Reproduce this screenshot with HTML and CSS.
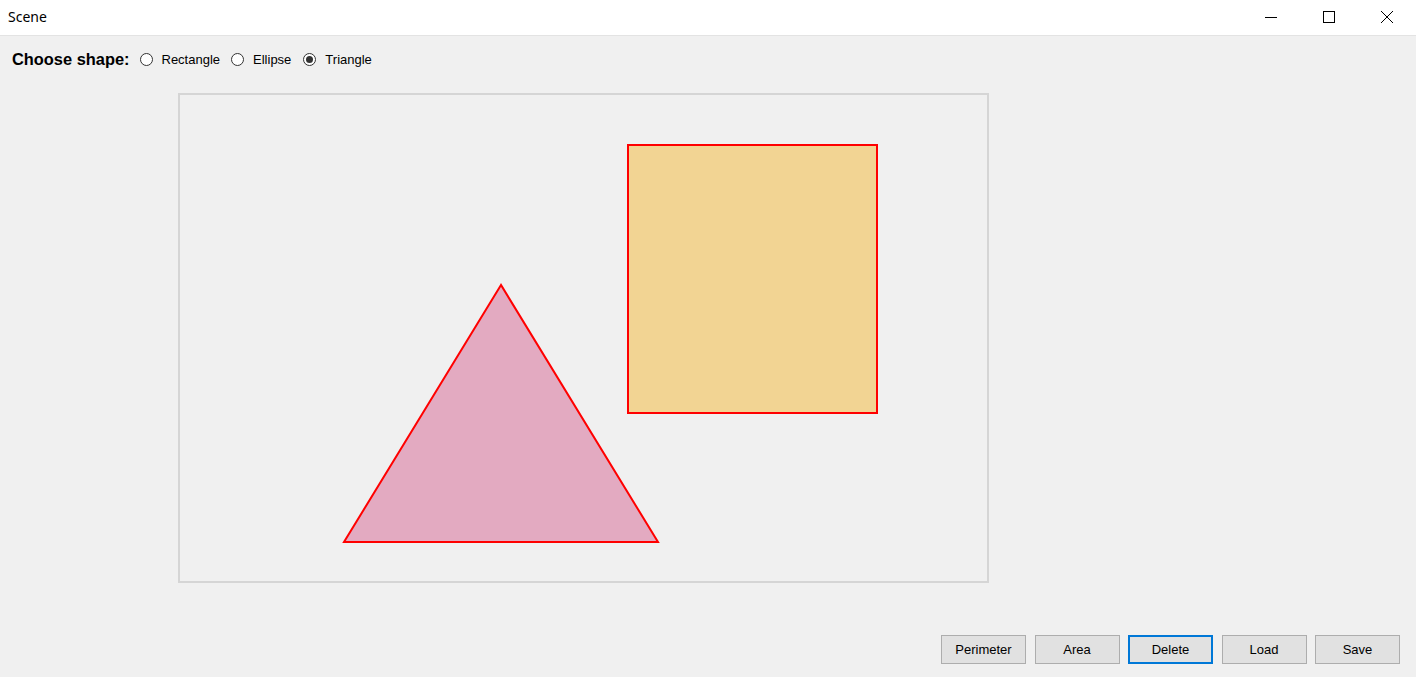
FILE: index.html
```html
<!DOCTYPE html>
<html>
<head>
<meta charset="utf-8">
<title>Scene</title>
<link rel="stylesheet" href="styles.css">
</head>
<body>
<div class="titlebar">
  <div class="title">Scene</div>
  <div class="controls">
    <div class="ctl"><svg width="14" height="14" viewBox="0 0 14 14"><line x1="1" y1="7.5" x2="13" y2="7.5" stroke="#000" stroke-width="1"/></svg></div>
    <div class="ctl"><svg width="14" height="14" viewBox="0 0 14 14"><rect x="1.5" y="1.5" width="11" height="11" fill="none" stroke="#000" stroke-width="1"/></svg></div>
    <div class="ctl"><svg width="14" height="14" viewBox="0 0 14 14"><path d="M1 1 L13 13 M13 1 L1 13" stroke="#000" stroke-width="1"/></svg></div>
  </div>
</div>
<div class="main">
  <div class="toolbar">
    <span class="label">Choose shape:</span>
    <label class="radio"><span class="dot"></span><span class="rtext">Rectangle</span></label>
    <label class="radio"><span class="dot"></span><span class="rtext">Ellipse</span></label>
    <label class="radio"><span class="dot checked"></span><span class="rtext">Triangle</span></label>
  </div>
  <div class="canvas">
    <svg class="scene" width="807" height="486" viewBox="0 0 807 486">
      <rect x="448" y="50" width="249" height="268" fill="#f2d493" stroke="#ff0000" stroke-width="2"/>
      <polygon points="321,190 164,447 478,447" fill="#e3aac1" stroke="#ff0000" stroke-width="2" stroke-linejoin="miter"/>
    </svg>
  </div>
  <div class="buttons">
    <button class="btn">Perimeter</button>
    <button class="btn">Area</button>
    <button class="btn focused">Delete</button>
    <button class="btn">Load</button>
    <button class="btn">Save</button>
  </div>
</div>
</body>
</html>
```
FILE: styles.css
```css
html, body {
  margin: 0;
  padding: 0;
  background: #f0f0f0;
  width: 1416px;
  height: 677px;
  overflow: hidden;
}
.titlebar {
  height: 35px;
  background: #ffffff;
  border-bottom: 1px solid #e3e3e3;
  display: flex;
  align-items: center;
  justify-content: space-between;
}
.title {
  font-family: "Noto Sans", "Open Sans", sans-serif;
  font-size: 14px;
  color: #000;
  padding-left: 8px;
  margin-top: -2px;
}
.controls {
  display: flex;
  height: 35px;
}
.ctl {
  width: 58px;
  height: 35px;
  display: flex;
  align-items: center;
  justify-content: center;
}
.ctl svg { display: block; margin-top: -2px; }
.main {
  display: flex;
  flex-direction: column;
}
.toolbar {
  height: 46px;
  display: flex;
  align-items: center;
  padding-left: 12px;
  font-family: "Liberation Sans", Arial, sans-serif;
  color: #000;
}
.label {
  font-weight: bold;
  font-size: 16.4px;
  margin-right: 10px;
}
.radio {
  display: flex;
  align-items: center;
  font-size: 13px;
  margin-right: 11px;
}
.radio:nth-child(3) { margin-right: 12px; }
.dot {
  width: 11px;
  height: 11px;
  border: 1px solid #333;
  border-radius: 50%;
  background: #fff;
  position: relative;
  margin-right: 9px;
}
.dot.checked::after {
  content: "";
  position: absolute;
  left: 2px;
  top: 2px;
  width: 7px;
  height: 7px;
  border-radius: 50%;
  background: #333;
}
.canvas {
  margin-top: 11px;
  margin-left: 178px;
  width: 807px;
  height: 486px;
  border: 2px solid #d5d5d5;
  background: #f0f0f0;
}
.scene { display: block; }
.buttons {
  margin-top: 52px;
  display: flex;
  justify-content: flex-end;
  padding-right: 16px;
  gap: 8.5px;
}
.btn {
  width: 85px;
  height: 29px;
  background: #e1e1e1;
  border: 1px solid #adadad;
  font-family: "Liberation Sans", Arial, sans-serif;
  font-size: 13px;
  color: #000;
  padding: 0;
  margin: 0;
  border-radius: 0;
}
.btn.focused {
  border: 2px solid #0078d7;
}
```
